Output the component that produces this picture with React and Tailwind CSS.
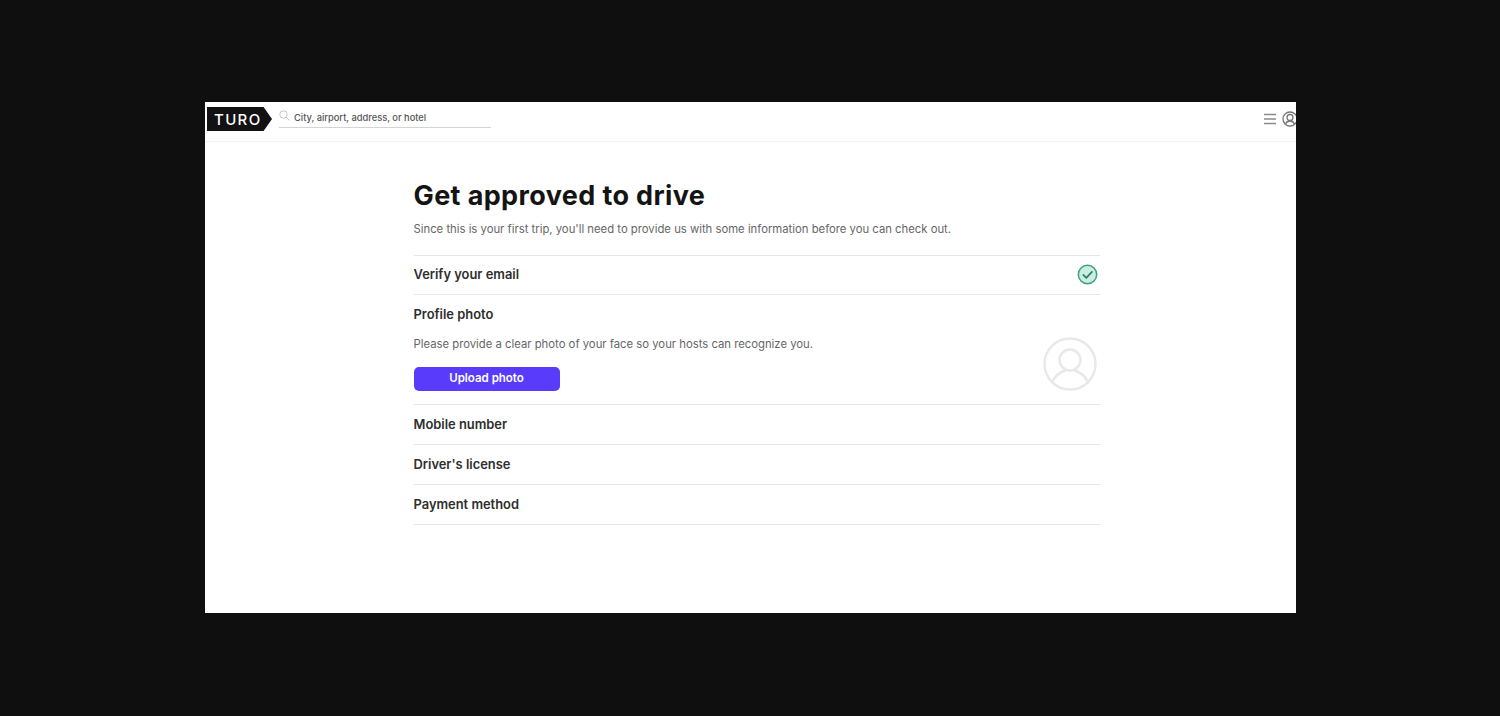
const font = { fontFamily: "Inter, 'Noto Sans', sans-serif" };

function Logo() {
  return (
    <div className="flex h-6 w-[65px] items-center bg-[#121214] pl-[7px] [clip-path:polygon(0_0,87%_0,100%_50%,87%_100%,0_100%)]">
      <span className="text-[15px] font-medium leading-none tracking-[0.09em] text-white">TURO</span>
    </div>
  );
}

function Row({ label, children, className = "h-10" }) {
  return (
    <div className={`flex items-center justify-between border-b border-[#e6e6e6] ${className}`}>
      <span className="text-[12.900px] font-semibold text-[#2e2e2e]">{label}</span>
      {children}
    </div>
  );
}

function Check() {
  return (
    <svg width="21" height="21" viewBox="0 0 21 21" fill="none" className="mb-[1px] mr-[2px]">
      <circle cx="10.5" cy="10.5" r="9.2" fill="#c9eee0" stroke="#3f9f80" strokeWidth="1.5" />
      <path d="M6.3 10.8l3 3 5.6-6" stroke="#2f7d66" strokeWidth="1.7" strokeLinecap="round" strokeLinejoin="round" />
    </svg>
  );
}

function Avatar() {
  return (
    <svg width="54" height="54" viewBox="0 0 54 54" fill="none" stroke="#e8e8e8" strokeWidth="2.4">
      <circle cx="27" cy="27" r="25.5" />
      <circle cx="27" cy="23" r="10.5" />
      <path d="M9 45c4-8 10-10.500 13-11.500M45 45c-4-8-10-10.500-13-11.500" strokeLinecap="round" />
    </svg>
  );
}

export default function App() {
  return (
    <div className="h-[716px] w-[1500px] overflow-hidden bg-[#0f0f0f] pl-[205px] pt-[102px]" style={font}>
      <div className="h-[511px] w-[1091px] overflow-hidden bg-white">
        <header className="flex h-10 items-start border-b border-[#f2f2f2] pl-[2px] pt-[5px]">
          <Logo />
          <div className="ml-[7px] flex h-[21px] w-[212px] items-center gap-[4px] border-b border-[#d4d4d4] pt-[1px]">
            <svg width="11" height="11" viewBox="0 0 11 11" fill="none" stroke="#c4c4c4" strokeWidth="1" className="mb-[5px]">
              <circle cx="4.500" cy="4.500" r="3.700" />
              <path d="M7.200 7.200l3.300 3.300" />
            </svg>
            <span className="text-[9.300px] font-medium text-[#555]">City, airport, address, or hotel</span>
          </div>
          <div className="ml-auto mt-[4px] flex w-[32px] items-center gap-[6px] overflow-hidden">
            <svg width="12" height="12" viewBox="0 0 12 12" stroke="#8a8a8a" strokeWidth="1.300" className="shrink-0">
              <path d="M0 1.500h12M0 6h12M0 10.500h12" />
            </svg>
            <svg width="16" height="16" viewBox="0 0 16 16" fill="none" stroke="#777" strokeWidth="1.300" className="shrink-0">
              <circle cx="8" cy="8" r="7" />
              <circle cx="8" cy="6.500" r="3" />
              <path d="M3.500 13c1-2.500 3-3 4.500-3s3.500.5 4.500 3" />
            </svg>
          </div>
        </header>

        <main className="ml-[208.500px] w-[686.500px] pt-[36px]">
          <h1 className="text-[27px] font-bold leading-[36px] tracking-[0.38px] text-[#141414]">Get approved to drive</h1>
          <p className="mt-[6px] pb-[17px] text-[11.300px] leading-[18px] text-[#666]">
            Since this is your first trip, you'll need to provide us with some information before you can check out.
          </p>
          <div className="border-t border-[#e6e6e6]">
            <Row label="Verify your email" className="h-[39px]">
              <Check />
            </Row>
            <div className="flex h-[110px] items-start justify-between border-b border-[#e6e6e6]">
              <div>
                <div className="pt-[11px] text-[12.900px] font-semibold leading-[18px] text-[#2e2e2e]">Profile photo</div>
                <p className="mt-[11px] text-[11.300px] leading-[18px] text-[#666]">
                  Please provide a clear photo of your face so your hosts can recognize you.
                </p>
                <button className="mt-[14px] flex h-6 w-[146px] items-center justify-center rounded-[5px] bg-[#593cfb] text-[11.500px] font-semibold text-white">
                  Upload photo
                </button>
              </div>
              <div className="mr-[3px] mt-[42px]">
                <Avatar />
              </div>
            </div>
            <Row label="Mobile number" />
            <Row label="Driver's license" />
            <Row label="Payment method" />
          </div>
        </main>
      </div>
    </div>
  );
}
